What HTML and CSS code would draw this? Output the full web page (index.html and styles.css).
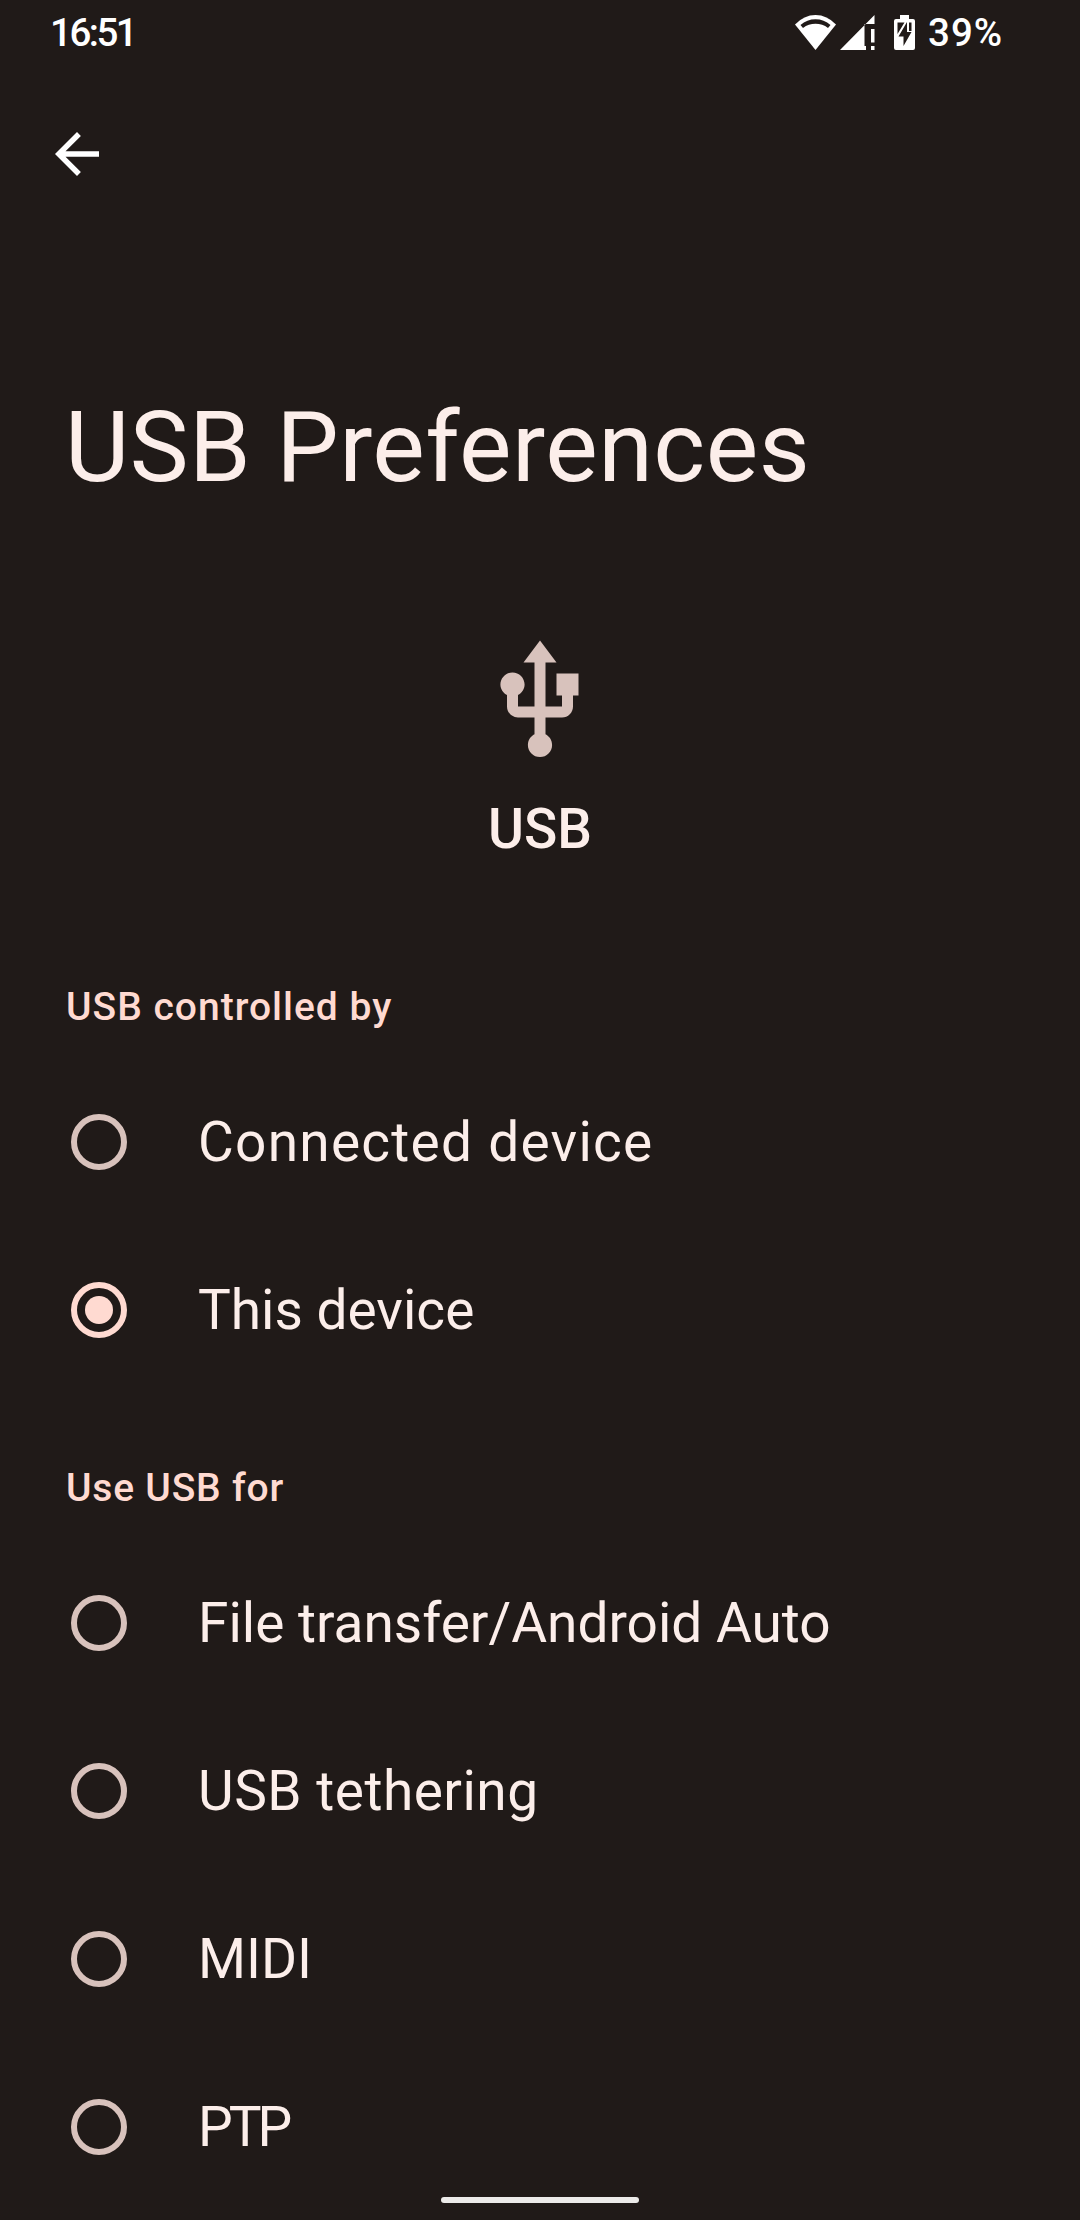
FILE: index.html
```
<!DOCTYPE html>
<html lang="en">

<head>
    <meta charset="UTF-8">
    <meta name="viewport" content="width=device-width, initial-scale=1.0">
    <title>USB Preferences</title>
    <link rel="stylesheet" href="styles.css">
</head>

<body>

    <header class="status-bar">
        <span class="clock">16:51</span>
        <div class="status-icons">
            <svg class="wifi" width="42" height="36" viewBox="0 0 42 36">
                <path d="M0 9.500Q9 0 20.500 0T41 9.500L20.500 35Z" fill="#fff"/>
                <path d="M5.500 10Q12 4.200 20.500 4.200T35.500 10L33 13Q27.500 8.800 20.500 8.800T8 13Z" fill="#201a18"/>
            </svg>
            <svg class="signal" width="35" height="36" viewBox="0 0 35 36">
                <path d="M0 35L34.500 0V9H24.500V31H26V35Z" fill="#fff"/>
                <path d="M31 14h3.500v13.500H31zM31 31h3.500v4H31z" fill="#fff"/>
            </svg>
            <svg class="battery" width="21" height="36" viewBox="0 0 21 36">
                <path d="M6 0h9v4h4q2 0 2 2v27q0 2-2 2H2q-2 0-2-2V6q0-2 2-2h4z" fill="#fff"/>
                <path d="M3.500 7.500h7L3.500 19zM15 7.500h2.500V16H15z" fill="#201a18"/>
                <path d="M13 7L4.500 21.500H9.500V31L17.500 17H13z" fill="#201a18"/>
            </svg>
            <span class="percent">39%</span>
        </div>
    </header>

    <nav class="toolbar">
        <svg width="66" height="66" viewBox="0 0 24 24">
            <path d="M20 11H7.830l5.590-5.590L12 4l-8 8 8 8 1.410-1.410L7.830 13H20z" fill="#fff"/>
        </svg>
    </nav>

    <h1 class="title">USB Preferences</h1>

    <section class="entity">
        <svg width="132" height="132" viewBox="0 0 24 24">
            <path d="M15 7v4h1v2h-3V5h2l-3-4-3 4h2v8H8v-2.070c.7-.37 1.200-1.080 1.200-1.930 0-1.210-.99-2.200-2.200-2.200S4.800 7.790 4.800 9c0 .85.5 1.560 1.200 1.930V13c0 1.110.89 2 2 2h3v3.050c-.71.37-1.200 1.100-1.200 1.950 0 1.220.99 2.200 2.200 2.200s2.200-.98 2.200-2.200c0-.85-.49-1.580-1.200-1.950V15h3c1.110 0 2-.89 2-2v-2h1V7z" fill="#d8c2bc"/>
        </svg>
        <span class="entity-name">USB</span>
    </section>

    <main>
        <h2 class="category">USB controlled by</h2>
        <div class="option">
            <span class="radio"></span>
            <span class="label connected">Connected device</span>
        </div>
        <div class="option">
            <span class="radio checked"></span>
            <span class="label">This device</span>
        </div>

        <h2 class="category use">Use USB for</h2>
        <div class="option">
            <span class="radio"></span>
            <span class="label">File transfer/Android Auto</span>
        </div>
        <div class="option">
            <span class="radio"></span>
            <span class="label tethering">USB tethering</span>
        </div>
        <div class="option">
            <span class="radio"></span>
            <span class="label">MIDI</span>
        </div>
        <div class="option">
            <span class="radio"></span>
            <span class="label ptp">PTP</span>
        </div>
    </main>

    <div class="home-bar"></div>

</body>

</html>
```
FILE: styles.css
```
* {
    box-sizing: border-box;
}

body {
    margin: 0;
    height: 2220px;
    overflow: hidden;
    position: relative;
    background-color: #201a18;
    color: #fceeea;
    font-family: Roboto, "Noto Sans", sans-serif;
}

svg {
    display: block;
    flex: none;
}

.status-bar {
    display: flex;
    justify-content: space-between;
    height: 66px;
    padding: 0 75px 0 50px;
    color: #fff;
    font-size: 38.5px;
    font-weight: 500;
    line-height: 66px;
}

.clock {
    letter-spacing: -2.5px;
}

.status-icons {
    display: flex;
}

.status-icons svg {
    margin-top: 15px;
}

.signal {
    margin-left: 3px;
}

.battery {
    margin-left: 19px;
}

.percent {
    width: 77px;
    margin-left: 13px;
    letter-spacing: 1px;
}

.toolbar {
    height: 154px;
    padding: 55px 44px 0;
}

.title {
    margin: 0;
    padding: 169px 65px 0;
    height: 415px;
    font-size: 99px;
    font-weight: 400;
    line-height: 116px;
    letter-spacing: 0.5px;
    white-space: nowrap;
}

.entity {
    display: flex;
    flex-direction: column;
    align-items: center;
    height: 278px;
}

.entity-name {
    margin-top: 29px;
    font-size: 55px;
    font-weight: 500;
    line-height: 66px;
}

.category {
    margin: 0;
    height: 145px;
    padding: 71px 66px 0;
    color: #ffdad1;
    font-size: 39px;
    font-weight: 500;
    line-height: 47px;
    letter-spacing: 1px;
}

.category.use {
    letter-spacing: 0.8px;
}

.option {
    display: flex;
    align-items: center;
    height: 168px;
    padding-left: 71px;
}

.radio {
    display: flex;
    align-items: center;
    justify-content: center;
    width: 56px;
    height: 56px;
    border: 6px solid #d8c2bc;
    border-radius: 50%;
}

.radio.checked {
    border-color: #ffdad1;
}

.radio.checked::after {
    content: "";
    width: 28px;
    height: 28px;
    border-radius: 50%;
    background-color: #ffdad1;
}

.label {
    margin-left: 71px;
    font-size: 55px;
    line-height: 66px;
    white-space: nowrap;
}

.connected {
    letter-spacing: 1.25px;
}

.tethering {
    letter-spacing: 0.5px;
}

.ptp {
    letter-spacing: -4px;
}

.home-bar {
    position: absolute;
    left: 441px;
    bottom: 17px;
    width: 198px;
    height: 6px;
    border-radius: 3px;
    background-color: #ecebe9;
}
```
